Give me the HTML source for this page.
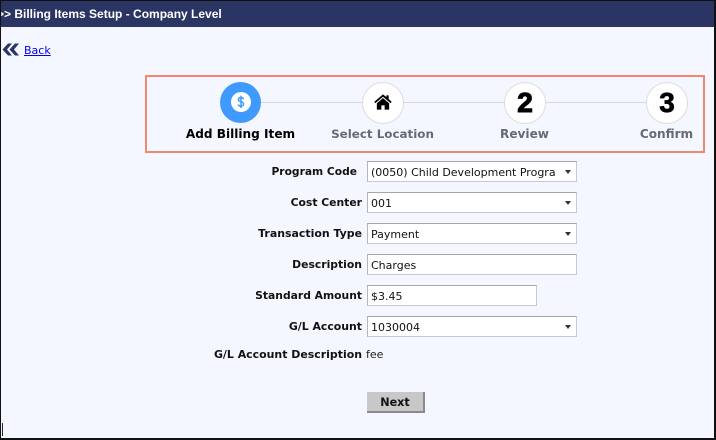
<!DOCTYPE html>
<html><head><meta charset="utf-8">
<style>
html,body{margin:0;padding:0;}
body{width:716px;height:440px;position:relative;overflow:hidden;background:#f4f7ff;font-family:"DejaVu Sans","Liberation Sans",sans-serif;font-size:11px;color:#000;}
.a{position:absolute;}
.hd{left:1px;top:1px;width:713px;height:26px;background:#2a3563;overflow:hidden;}
.tt{left:-4px;top:5px;width:400px;height:16px;font:bold 12px/16px "Liberation Sans",sans-serif;color:#fff;white-space:pre;}
.lb{left:100px;width:262px;text-align:right;font-weight:bold;font-size:10.7px;line-height:14px;color:#111;white-space:nowrap;}
.f{left:367px;box-sizing:border-box;height:21px;background:#fff;border:1px solid #c8c8d4;border-top-color:#a5a5b0;border-left-color:#b5b5c0;font-size:11px;line-height:22px;padding-left:3px;color:#111;white-space:nowrap;overflow:hidden;}
.ar{width:0;height:0;border-left:3.5px solid transparent;border-right:3.5px solid transparent;border-top:4px solid #333;left:565px;}
.c{width:40px;height:40px;border-radius:50%;background:#fff;border:1px solid #ddd;top:82px;box-sizing:content-box;text-align:center;font:bold 28px/40px "Liberation Sans",sans-serif;color:#000;-webkit-text-stroke:0.7px #000;}
.s{top:127px;font-weight:bold;font-size:12.1px;line-height:15px;color:#666a75;text-align:center;width:160px;white-space:nowrap;}
</style></head>
<body>
<div class="a hd"><div class="a tt">&gt;&gt; Billing Items Setup - Company Level</div></div>
<div class="a" style="left:0;top:0;width:716px;height:1px;background:#111"></div>
<div class="a" style="left:0;top:0;width:1px;height:440px;background:#111"></div>
<div class="a" style="left:714px;top:0;width:2px;height:440px;background:#111"></div>
<div class="a" style="left:0;top:438px;width:716px;height:2px;background:#111"></div>
<div class="a" style="left:2px;top:423px;width:1px;height:13px;background:#222"></div>

<svg class="a" style="left:2px;top:43px" width="18" height="13" viewBox="0 0 18 13"><path d="M6 0.5 L0.5 6.5 L6 12.5 H10 L5 6.5 L10 0.5 Z M13 0.5 L7.5 6.5 L13 12.5 H17 L12 6.5 L17 0.5 Z" fill="#2a3563"/></svg>
<a class="a" style="left:24px;top:44px;color:#0000ee;text-decoration:underline;font-size:11px;line-height:14px">Back</a>

<div class="a" style="left:145px;top:75px;width:560px;height:78px;box-sizing:border-box;border:2px solid #f0876e"></div>
<div class="a" style="left:241px;top:102px;width:426px;height:1px;background:#d8d8dc"></div>

<div class="a" style="left:220px;top:82px;width:41px;height:41px;border-radius:50%;background:#4099ff"></div>
<div class="a" style="left:231px;top:92px;width:20px;height:20px;border-radius:50%;background:#fff"></div>
<svg class="a" style="left:236px;top:95px" width="10" height="14" viewBox="0 0 10 14"><path d="M7.6 4.2 C7.3 3 6.3 2.6 5 2.6 C3.4 2.6 2.4 3.4 2.4 4.6 C2.4 7.3 7.6 6 7.6 9 C7.6 10.3 6.5 11.1 5 11.1 C3.6 11.1 2.6 10.6 2.3 9.5 M5 0.8 V13" fill="none" stroke="#4099ff" stroke-width="1.5"/></svg>

<div class="a c" style="left:362px"></div>
<svg class="a" style="left:374px;top:94px" width="18" height="16" viewBox="0 0 18 16"><path d="M9 0.5 L12.5 3.4 V1.5 H14.5 V5.1 L17.5 7.8 L16.6 9 L9 2.6 L1.4 9 L0.5 7.8 Z M3 9.4 L9 4.2 L15 9.4 V15.5 H10.8 V11.2 H7.2 V15.5 H3 Z" fill="#000" stroke="#000" stroke-width="0.3"/></svg>
<div class="a c" style="left:504px;-webkit-text-stroke:1.1px #000">2</div>
<div class="a c" style="left:646px">3</div>

<div class="a s" style="left:160.5px;color:#000">Add Billing Item</div>
<div class="a s" style="left:303px;font-size:11.9px;margin-left:-0.5px">Select Location</div>
<div class="a s" style="left:444.5px">Review</div>
<div class="a s" style="left:586.5px">Confirm</div>

<div class="a lb" style="top:165px;left:95px">Program Code</div>
<div class="a lb" style="top:196px;font-size:10.8px">Cost Center</div>
<div class="a lb" style="top:227px;font-size:10.95px">Transaction Type</div>
<div class="a lb" style="top:258px;font-size:10.8px">Description</div>
<div class="a lb" style="top:289px;font-size:10.75px">Standard Amount</div>
<div class="a lb" style="top:320px;font-size:10.9px">G/L Account</div>
<div class="a lb" style="top:348px;font-size:10.95px">G/L Account Description</div>

<div class="a f" style="top:161px;width:210px">(0050) Child Development Progra</div><div class="a ar" style="top:170px"></div>
<div class="a f" style="top:192px;width:210px">001</div><div class="a ar" style="top:201px"></div>
<div class="a f" style="top:223px;width:210px">Payment</div><div class="a ar" style="top:232px"></div>
<div class="a f" style="top:254px;width:210px">Charges</div>
<div class="a f" style="top:285px;width:170px">$3.45</div>
<div class="a f" style="top:316px;width:210px">1030004</div><div class="a ar" style="top:325px"></div>
<div class="a" style="left:366px;top:348px;font-size:11px;line-height:14px;color:#222">fee</div>

<div class="a" style="left:367px;top:392px;width:58px;height:21px;box-sizing:border-box;background:#c8c8c8;border-right:2px solid #8a8a8a;border-bottom:2px solid #8a8a8a;text-align:center;font-weight:bold;font-size:11.2px;line-height:21px;color:#111">Next</div>
</body></html>
